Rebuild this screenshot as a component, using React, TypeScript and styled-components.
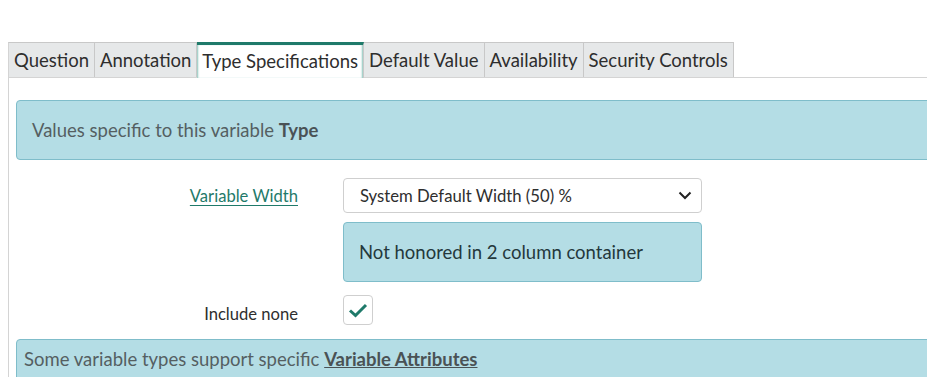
import React from 'react';
import styled, { createGlobalStyle } from 'styled-components';

const GlobalStyle = createGlobalStyle`
  html, body {
    margin: 0;
    padding: 0;
    background: #ffffff;
    overflow: hidden;
  }
  body {
    font-family: "Lato", "Noto Sans", sans-serif;
    font-size: 16px;
    color: #2e2e2e;
  }
`;

const Page = styled.div`
  width: 1000px;
  height: 377px;
  overflow: hidden;
  padding: 42px 0 0 8px;
  box-sizing: border-box;
`;

const TabBar = styled.div`
  display: flex;
  align-items: flex-end;
  border-bottom: 1px solid #d4d4d4;
  height: 35px;
`;

const Tab = styled.div<{ $active?: boolean }>`
  box-sizing: border-box;
  height: ${(p) => (p.$active ? '36px' : '35px')};
  padding: ${(p) => (p.$active ? '0 5px 2px' : '0 5px')};
  display: flex;
  align-items: center;
  font-size: 18.5px;
  color: #2e2e2e;
  background: ${(p) => (p.$active ? '#ffffff' : '#e6e8e9')};
  border-top: ${(p) => (p.$active ? '3px solid #1f7a6a' : '1px solid #c8c8c8')};
  border-right: 1px solid #c8c8c8;
  margin-bottom: ${(p) => (p.$active ? '-1px' : '0')};
  box-shadow: ${(p) =>
    p.$active ? 'inset 2px 0 2px -1px #8ac4ba, inset -2px 0 2px -1px #8ac4ba' : 'none'};
  white-space: nowrap;
  &:first-child {
    border-left: 1px solid #d4d4d4;
  }
`;

const Panel = styled.div`
  border-left: 1px solid #d4d4d4;
  padding: 22px 0 0 7px;
  height: 300px;
`;

const InfoBox = styled.div<{ $pad?: number; $dark?: boolean }>`
  box-sizing: border-box;
  background: #b4dde5;
  border: 1px solid #7fbdca;
  border-radius: 4px;
  padding: 0 ${(p) => p.$pad ?? 15}px;
  display: flex;
  align-items: center;
  font-size: 18.5px;
  color: ${(p) => (p.$dark ? '#24383c' : '#555f62')};
  b,
  u {
    font-weight: 700;
    color: #4a5255;
  }
  u {
    text-decoration: underline;
  }
`;

const WideBox = styled(InfoBox)`
  height: 60px;
`;

const Form = styled.div`
  display: grid;
  grid-template-columns: 282px 359px;
  column-gap: 45px;
  margin-top: 18px;
`;

const Label = styled.div`
  text-align: right;
  font-size: 16.6px;
  color: #2e2e2e;
  align-self: center;
`;

const LinkLabel = styled(Label)`
  color: #1f7a6a;
  text-decoration: underline;
  text-underline-offset: 3px;
`;

const Select = styled.div`
  box-sizing: border-box;
  height: 35px;
  border: 1px solid #cfcfcf;
  border-radius: 4px;
  display: flex;
  align-items: center;
  justify-content: space-between;
  padding: 0 9px 0 16px;
  font-size: 16.7px;
  color: #2e2e2e;
`;

const NoteBox = styled(InfoBox)`
  height: 60px;
  margin-top: 9px;
`;

const CheckRow = styled.div`
  grid-column: 1 / 3;
  display: grid;
  grid-template-columns: 282px 359px;
  column-gap: 45px;
  margin-top: 13px;
`;

const CheckLabel = styled(Label)`
  padding-top: 7px;
`;

const CheckBox = styled.div`
  box-sizing: border-box;
  width: 30px;
  height: 30px;
  border: 1px solid #cfcfcf;
  border-radius: 4px;
  display: flex;
  align-items: center;
  justify-content: center;
`;

const BottomBox = styled(InfoBox)`
  height: 50px;
  margin-top: 14px;
  align-items: flex-start;
  padding-top: 8px;
`;

export default function App() {
  const tabs = [
    'Question',
    'Annotation',
    'Type Specifications',
    'Default Value',
    'Availability',
    'Security Controls',
  ];
  return (
    <>
      <GlobalStyle />
      <Page>
        <TabBar>
          {tabs.map((t) => (
            <Tab key={t} $active={t === 'Type Specifications'}>
              {t}
            </Tab>
          ))}
        </TabBar>
        <Panel>
          <WideBox>
            <span>
              Values specific to this variable <b>Type</b>
            </span>
          </WideBox>
          <Form>
            <LinkLabel>Variable Width</LinkLabel>
            <Select>
              <span>System Default Width (50) %</span>
              <svg width="14" height="9" viewBox="0 0 14 9">
                <path d="M1.5 1.5 L7 7 L12.5 1.5" fill="none" stroke="#222" strokeWidth="2" />
              </svg>
            </Select>
            <div />
            <NoteBox $dark>Not honored in 2 column container</NoteBox>
            <CheckRow>
              <CheckLabel>Include none</CheckLabel>
              <CheckBox>
                <svg width="20" height="16" viewBox="0 0 20 16">
                  <path
                    d="M2 8.5 L7.5 13.5 L18 3"
                    fill="none"
                    stroke="#1f7a6a"
                    strokeWidth="3"
                  />
                </svg>
              </CheckBox>
            </CheckRow>
          </Form>
          <BottomBox $pad={7}>
            <span>
              Some variable types support specific <u>Variable Attributes</u>
            </span>
          </BottomBox>
        </Panel>
      </Page>
    </>
  );
}
